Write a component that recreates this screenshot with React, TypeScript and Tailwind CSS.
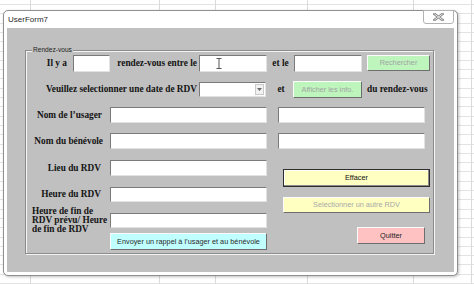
import React from "react";

const lbl =
  "font-['Liberation_Serif',serif] font-bold text-[9.3px] leading-[9px] text-[#141414] whitespace-nowrap";
const btnFont = "font-['Liberation_Sans',sans-serif] text-[7.3px] leading-none whitespace-nowrap";
const input =
  "bg-white border border-t-[#7a7a7a] border-l-[#7a7a7a] border-r-[#e2e2e2] border-b-[#e2e2e2]";
const raised =
  "border border-t-[#fbfbfb] border-l-[#fbfbfb] border-r-[#6e6e6e] border-b-[#6e6e6e] flex items-center justify-center";

function Grid() {
  const hs = Array.from({ length: 31 }, (_, i) => 4 + i * 9.3);
  const vs = [30, 159, 215, 307, 413, 471];
  return (
    <svg className="absolute inset-0" width="474" height="284" aria-hidden="true">
      {hs.map((y) => (
        <line key={"h" + y} x1="0" x2="474" y1={Math.round(y) + 0.5} y2={Math.round(y) + 0.5} stroke="#e3e3e3" strokeWidth="1" />
      ))}
      {vs.map((x) => (
        <line key={"v" + x} x1={x + 0.5} x2={x + 0.5} y1="0" y2="284" stroke="#dadada" strokeWidth="1" />
      ))}
    </svg>
  );
}

function IBeam() {
  return (
    <svg className="absolute left-[16px] top-[2px]" width="6" height="11" viewBox="0 0 6 11" aria-hidden="true">
      <path d="M0.5 0.5h2.5M3 0.5h2.5M3 0.5v10M0.5 10.5h2.5M3 10.5h2.5" stroke="#555" strokeWidth="1" fill="none" />
    </svg>
  );
}

export default function App() {
  return (
    <div className="relative h-[284px] w-[474px] overflow-hidden bg-white pl-[3px] pt-[10px]">
      <Grid />
      <div className="relative flex h-[266px] w-[455px] flex-col rounded-[5px] border border-[#8f8f8f] bg-white shadow-[1px_1px_3px_rgba(0,0,0,0.25)]">
        {/* title bar */}
        <div className="flex h-[17px] items-center justify-between pl-[4px] pr-[3px]">
          <span className="font-['Liberation_Sans',sans-serif] text-[8px] leading-none text-[#2a2a2a]">UserForm7</span>
          <div className="mt-[-1px] flex h-[14px] w-[31px] items-center justify-center self-start rounded-b-[3px] border border-[#b3b3b3] bg-white">
            <svg width="11" height="8" viewBox="0 0 11 8" aria-hidden="true">
              <path d="M1.5 1L9.5 7M9.5 1L1.5 7" stroke="#8a8a8a" strokeWidth="2.6" strokeLinecap="square" />
              <path d="M1.5 1L9.5 7M9.5 1L1.5 7" stroke="#f2f2f2" strokeWidth="0.9" />
            </svg>
          </div>
        </div>
        {/* body */}
        <div className="mx-[3px] h-[244px] bg-[#c0c0c0] pl-[18px] pt-[22px]">
          <div className="relative h-[204px] w-[409px] border border-[#8c8c8c] shadow-[1px_1px_0_#f4f4f4,inset_1px_1px_0_#f4f4f4]">
            <span className="absolute left-[6px] top-[-5px] bg-[#c0c0c0] px-[1px] font-['Liberation_Sans',sans-serif] text-[6.6px] leading-[8px] text-[#222]">
              Rendez-vous
            </span>
            <div className="flex flex-col pt-[4px]">
              {/* row 1 */}
              <div className="flex h-[17px] items-center">
                <span className={`${lbl} w-[47px] pr-[6px] text-right`}>Il y a</span>
                <div className={`${input} h-[17px] w-[37px]`} />
                <span className={`${lbl} w-[89px] pr-[2px] text-right`}>rendez-vous entre le</span>
                <div className={`${input} relative h-[17px] w-[68px]`}>
                  <IBeam />
                </div>
                <span className={`${lbl} w-[27px] text-center`}>et le</span>
                <div className={`${input} h-[17px] w-[68px]`} />
                <div className={`${raised} ${btnFont} ml-[5px] h-[16px] w-[63px] self-start bg-[#bdf5bd] text-[#a3a3a3]`}>
                  Rechercher
                </div>
              </div>
              {/* row 2 */}
              <div className="mt-[9px] flex h-[17px] items-center">
                <span className={`${lbl} w-[173px] pr-[2px] text-right`}>Veuillez selectionner une date de RDV</span>
                <div className={`${input} flex h-[15px] w-[67px] justify-end p-[1px]`}>
                  <div className="flex w-[9px] items-center justify-center border border-[#c9c9c9] bg-[#f1f1f1]">
                    <svg width="5" height="3" viewBox="0 0 5 3" aria-hidden="true">
                      <path d="M0 0h5L2.5 3z" fill="#6a6a6a" />
                    </svg>
                  </div>
                </div>
                <span className={`${lbl} w-[27px] pl-[3px] text-center`}>et</span>
                <div className={`${raised} ${btnFont} h-[17px] w-[69px] bg-[#bdf5bd] text-[#a3a3a3]`}>
                  Afficher les info.
                </div>
                <span className={`${lbl} ml-[5px]`}>du rendez-vous</span>
              </div>
              {/* columns */}
              <div className="mt-[9px] flex">
                <div className="flex w-[241px] flex-col">
                  <div className="flex h-[16px] items-center">
                    <span className={`${lbl} w-[84px] pr-[8px] text-right`}>Nom de l’usager</span>
                    <div className={`${input} h-[16px] w-[157px]`} />
                  </div>
                  <div className="mt-[10px] flex h-[16px] items-center">
                    <span className={`${lbl} w-[84px] pr-[7px] text-right`}>Nom du bénévole</span>
                    <div className={`${input} h-[16px] w-[157px]`} />
                  </div>
                  <div className="mt-[11px] flex h-[16px] items-center">
                    <span className={`${lbl} w-[84px] pr-[9px] text-right`}>Lieu du RDV</span>
                    <div className={`${input} h-[16px] w-[157px]`} />
                  </div>
                  <div className="mt-[11px] flex h-[15px] items-center">
                    <span className={`${lbl} w-[84px] pr-[9px] text-right`}>Heure du RDV</span>
                    <div className={`${input} h-[15px] w-[157px]`} />
                  </div>
                  <div className="mt-[11px] flex h-[15px] items-center">
                    <span className={`${lbl} w-[84px] pl-[6px] text-left`}>
                      Heure de fin de
                      <br />
                      RDV prévu/ Heure
                      <br />
                      de fin de RDV
                    </span>
                    <div className={`${input} h-[15px] w-[157px]`} />
                  </div>
                  <div className={`${raised} ${btnFont} ml-[84px] mt-[5px] h-[17px] w-[157px] bg-[#c0ffff] text-[#2a2a2a]`}>
                    Envoyer un rappel à l’usager et au bénévole
                  </div>
                </div>
                <div className="ml-[11px] flex w-[152px] flex-col">
                  <div className={`${input} h-[16px] w-[147px]`} />
                  <div className={`${input} mt-[10px] h-[16px] w-[147px]`} />
                  <div className={`${btnFont} ml-[5px] mt-[20px] flex h-[18px] w-[147px] items-center justify-center border border-[#2e2e2e] bg-[#ffffc2] text-[#111] shadow-[inset_-1px_-1px_0_#8a8a8a,inset_1px_1px_0_#ffffff]`}>
                    Effacer
                  </div>
                  <div className={`${raised} ${btnFont} ml-[5px] mt-[10px] h-[16px] w-[147px] bg-[#ffffc2] text-[#a8a8a8]`}>
                    Selectionner un autre RDV
                  </div>
                  <div className={`${raised} ${btnFont} ml-[79px] mt-[14px] h-[17px] w-[68px] bg-[#ffc2c2] text-[#222]`}>
                    Quitter
                  </div>
                </div>
              </div>
            </div>
          </div>
        </div>
      </div>
    </div>
  );
}
